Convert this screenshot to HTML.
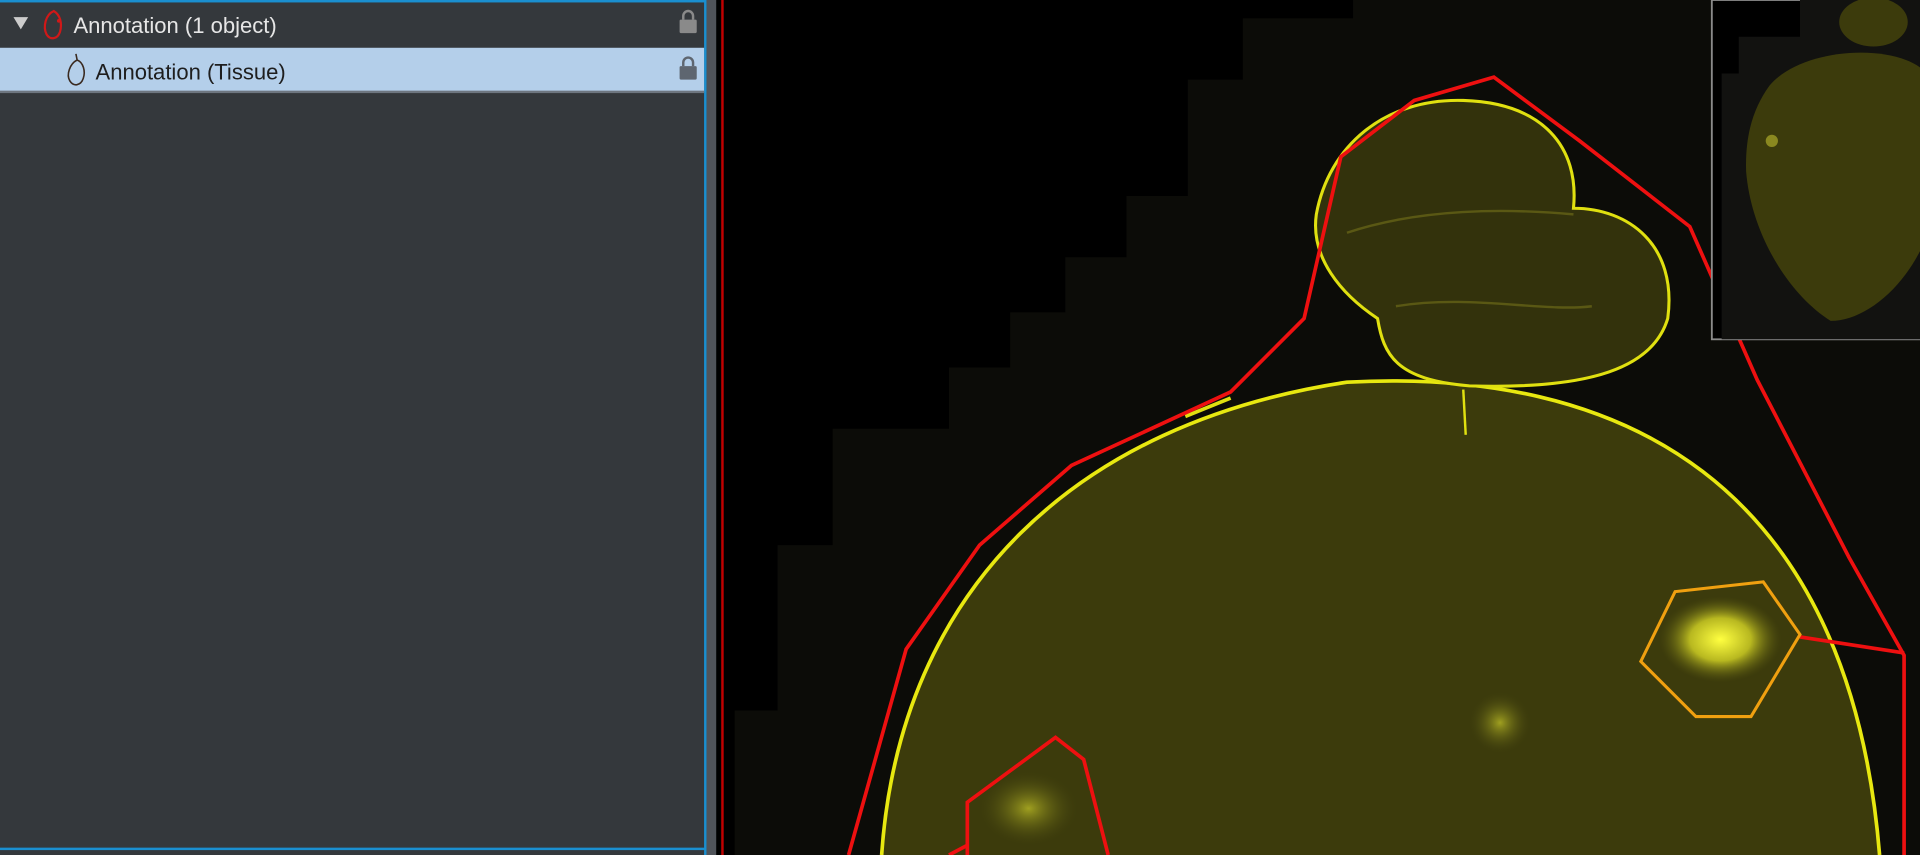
<!DOCTYPE html>
<html><head><style>
html,body{margin:0;padding:0;background:#000;width:1920px;height:855px;overflow:hidden}
svg{display:block}
</style></head><body>
<svg width="1920" height="855" viewBox="0 0 1568 698" preserveAspectRatio="none" xmlns="http://www.w3.org/2000/svg" font-family="Liberation Sans, sans-serif">
<defs>
<radialGradient id="g1"><stop offset="0" stop-color="#ffff40"/><stop offset="0.5" stop-color="#b8b820"/><stop offset="1" stop-color="#555510" stop-opacity="0"/></radialGradient>
<radialGradient id="g2"><stop offset="0" stop-color="#a0a020"/><stop offset="1" stop-color="#454510" stop-opacity="0"/></radialGradient>
</defs>
<rect x="0" y="0" width="577" height="698" fill="#34383c"/>
<rect x="0" y="0" width="577" height="2" fill="#1a8fd0"/>
<rect x="575" y="0" width="2" height="698" fill="#1a8fd0"/>
<rect x="0" y="692" width="577" height="2" fill="#1a8fd0"/>
<rect x="0" y="39" width="575" height="36" fill="#b4cfea"/>
<rect x="0" y="74" width="575" height="2" fill="#6e7680"/>
<path d="M11,14 L23,14 L17,24 Z" fill="#ccc"/>
<path d="M44,9 C37,12 35,22 38,28 C41,33 47,32 49,26 C51,19 49,12 44,9 Z" fill="none" stroke="#d01818" stroke-width="1.8"/>
<circle cx="48" cy="17" r="1.5" fill="#d01818"/>
<text x="60" y="27" font-size="18" fill="#e6e6e6">Annotation (1 object)</text>
<path d="M63,49 C57,52 54,61 57,66 C60,71 66,70 68,64 C70,58 68,51 63,49 Z M62,44 L63,49" fill="none" stroke="#3a2a20" stroke-width="1.3"/>
<text x="78" y="65" font-size="18" fill="#1e1e1e">Annotation (Tissue)</text>
<g fill="#8a8a8a"><rect x="555" y="16" width="14" height="11" rx="1"/><path d="M558,16 v-3 a4,4 0 0 1 8,0 v3" fill="none" stroke="#8a8a8a" stroke-width="2"/></g>
<g fill="#5e6670"><rect x="555" y="54" width="14" height="11" rx="1"/><path d="M558,54 v-3 a4,4 0 0 1 8,0 v3" fill="none" stroke="#5e6670" stroke-width="2"/></g>
<rect x="577" y="0" width="8" height="698" fill="#50545a"/>
<rect x="585" y="0" width="983" height="698" fill="#000"/>
<path d="M600,698 V580 H635 V445 H680 V350 H775 V300 H825 V255 H870 V210 H920 V160 H970 V65 H1015 V15 H1105 V0 H1568 V698 Z" fill="#0c0c08"/>
<rect x="589" y="0" width="2" height="698" fill="#c00000"/>
<path d="M720,698 C735,480 880,345 1100,312 C1320,300 1510,390 1535,698 Z" fill="#3c3b0c"/>
<path d="M720,698 C735,480 880,345 1100,312 C1320,300 1510,390 1535,698" fill="none" stroke="#e8e810" stroke-width="3"/>
<path d="M1075,175 C1085,120 1130,80 1195,82 C1260,84 1290,120 1285,170 C1330,170 1370,200 1362,260 C1350,300 1300,318 1200,315 C1140,310 1130,290 1125,260 C1095,240 1070,210 1075,175 Z" fill="#33320c" stroke="#e0e010" stroke-width="2.5"/>
<path d="M1195,318 L1197,355" stroke="#e0e010" stroke-width="2"/>
<path d="M1100,190 C1160,170 1230,170 1285,175 M1140,250 C1200,240 1260,255 1300,250" stroke="#5a5814" stroke-width="2" fill="none"/>
<path d="M968,340 L1005,325" stroke="#e0e010" stroke-width="3"/>
<ellipse cx="1225" cy="590" rx="25" ry="25" fill="url(#g2)"/>
<ellipse cx="1405" cy="522" rx="50" ry="35" fill="url(#g1)"/>
<ellipse cx="840" cy="660" rx="40" ry="30" fill="url(#g2)"/>
<polyline points="693,698 740,530 800,445 875,380 1005,320 1065,260 1095,128 1155,82 1220,63 1290,115 1380,185 1435,310 1510,455 1555,535 1555,698" fill="none" stroke="#ee1010" stroke-width="3"/>
<line x1="1470" y1="520" x2="1555" y2="533" stroke="#ee1010" stroke-width="3"/>
<polygon points="1340,540 1368,483 1440,475 1470,518 1430,585 1385,585" fill="none" stroke="#f0a010" stroke-width="2.5"/>
<polyline points="790,698 790,655 862,602 885,620 905,698" fill="none" stroke="#ee1010" stroke-width="3"/>
<line x1="775" y1="698" x2="790" y2="690" stroke="#ee1010" stroke-width="3"/>
<rect x="1398" y="0" width="170" height="277" fill="#000" stroke="#8a8a8a" stroke-width="1.5"/>
<path d="M1406,277 V60 H1420 V30 H1470 V0 H1568 V277 Z" fill="#121210"/>
<path d="M1445,70 C1470,40 1540,35 1568,55 L1568,205 C1550,240 1520,262 1495,262 C1460,240 1430,190 1426,140 C1425,110 1432,88 1445,70 Z" fill="#3c3b0c"/>
<ellipse cx="1530" cy="18" rx="28" ry="20" fill="#3c3b0c"/>
<ellipse cx="1447" cy="115" rx="5" ry="5" fill="#8a8820"/>
</svg>
</body></html>
